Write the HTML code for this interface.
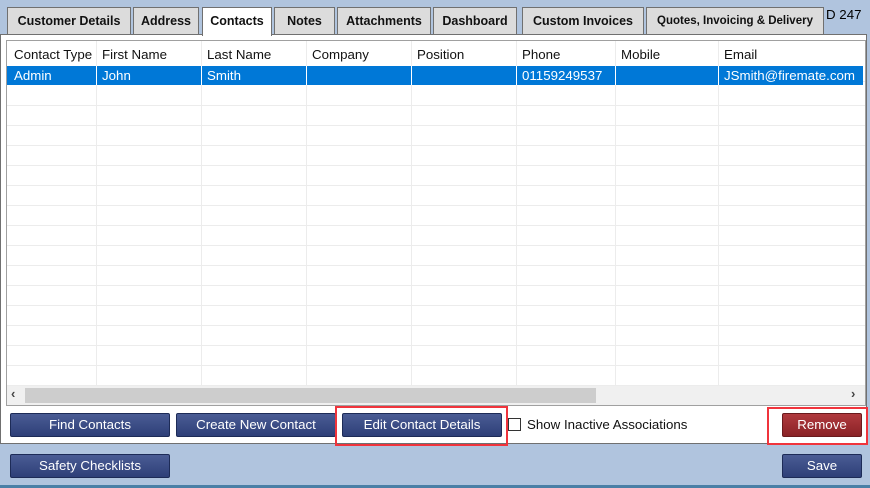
<!DOCTYPE html><html><head><style>
*{box-sizing:border-box;margin:0;padding:0}
body{width:870px;height:488px;background:#b0c4de;font-family:"Liberation Sans",Arial,sans-serif;position:relative;overflow:hidden}
.a{position:absolute}
.tab{position:absolute;top:7px;height:27px;background:#dcdcdc;border:1px solid #707070;border-bottom:none;font-weight:bold;font-size:12.5px;text-align:center;line-height:27px;color:#111}
.panel{left:0;top:34px;width:867px;height:410px;background:#fff;border:1px solid #707070}
.grid{left:6px;top:40px;width:860px;height:366px;border:1px solid #a0a0a0;background:#fff;
background-image:repeating-linear-gradient(to bottom,transparent 0,transparent 19px,#ececec 19px,#ececec 20px);background-position:0 45px}
.vl{position:absolute;top:41px;width:1px;height:345px;background:#ececec}
.h{position:absolute;top:47px;font-size:13.3px;color:#111}
.sel{left:7px;top:66px;width:856px;height:19px;background:#0078d7}
.c{position:absolute;top:68px;font-size:13.3px;color:#fff}
.btn{position:absolute;height:24px;border:1px solid #1d2b57;border-radius:2px;background:linear-gradient(#4a5c94,#2e3f78);color:#fff;font-size:13.3px;text-align:center;line-height:22px}
.red{position:absolute;border:2px solid #f0343c}
</style></head><body>
<div class="a panel"></div>
<div class="tab" style="left:7px;width:124px">Customer Details</div>
<div class="tab" style="left:133px;width:66px">Address</div>
<div class="tab" style="left:202px;width:70px;background:#fff;height:29px">Contacts</div>
<div class="tab" style="left:274px;width:61px">Notes</div>
<div class="tab" style="left:337px;width:94px">Attachments</div>
<div class="tab" style="left:433px;width:84px">Dashboard</div>
<div class="tab" style="left:522px;width:122px">Custom Invoices</div>
<div class="tab" style="left:646px;width:178px;font-size:11.5px">Quotes, Invoicing &amp; Delivery</div>
<div class="a" style="left:826px;top:7px;font-size:13.3px">D 247</div>
<div class="a grid"></div>
<div class="a" style="left:7px;top:41px;width:858px;height:25px;background:#fff"></div>
<div class="vl" style="left:96px"></div><div class="vl" style="left:201px"></div><div class="vl" style="left:306px"></div><div class="vl" style="left:411px"></div><div class="vl" style="left:516px"></div><div class="vl" style="left:615px"></div><div class="vl" style="left:718px"></div>
<div class="h" style="left:14px">Contact Type</div><div class="h" style="left:102px">First Name</div><div class="h" style="left:207px">Last Name</div><div class="h" style="left:312px">Company</div><div class="h" style="left:417px">Position</div><div class="h" style="left:522px">Phone</div><div class="h" style="left:621px">Mobile</div><div class="h" style="left:724px">Email</div>
<div class="a sel"></div>
<div class="vl" style="left:96px;top:66px;height:19px;background:#fff"></div><div class="vl" style="left:201px;top:66px;height:19px;background:#fff"></div><div class="vl" style="left:306px;top:66px;height:19px;background:#fff"></div><div class="vl" style="left:411px;top:66px;height:19px;background:#fff"></div><div class="vl" style="left:516px;top:66px;height:19px;background:#fff"></div><div class="vl" style="left:615px;top:66px;height:19px;background:#fff"></div><div class="vl" style="left:718px;top:66px;height:19px;background:#fff"></div>
<div class="c" style="left:14px">Admin</div><div class="c" style="left:102px">John</div><div class="c" style="left:207px">Smith</div><div class="c" style="left:522px">01159249537</div><div class="c" style="left:724px">JSmith@firemate.com</div>
<div class="a" style="left:7px;top:386px;width:858px;height:19px;background:#f0f0f0"></div>
<div class="a" style="left:25px;top:388px;width:571px;height:15px;background:#cdcdcd"></div>
<div class="a" style="left:11px;top:386px;font-size:13px;color:#444;font-weight:bold">‹</div>
<div class="a" style="left:851px;top:386px;font-size:13px;color:#444;font-weight:bold">›</div>
<div class="btn" style="left:10px;top:413px;width:160px">Find Contacts</div>
<div class="btn" style="left:176px;top:413px;width:160px">Create New Contact</div>
<div class="btn" style="left:342px;top:413px;width:160px">Edit Contact Details</div>
<div class="red" style="left:335px;top:406px;width:173px;height:40px"></div>
<div class="a" style="left:508px;top:418px;width:13px;height:13px;border:1px solid #333;background:#fff"></div>
<div class="a" style="left:527px;top:417px;font-size:13.3px;color:#111">Show Inactive Associations</div>
<div class="btn" style="left:782px;top:413px;width:80px;background:linear-gradient(#b03a3e,#8a2226);border-color:#6a1a1d">Remove</div>
<div class="red" style="left:767px;top:407px;width:101px;height:38px"></div>
<div class="btn" style="left:10px;top:454px;width:160px">Safety Checklists</div>
<div class="btn" style="left:782px;top:454px;width:80px">Save</div>
<div class="a" style="left:0;top:485px;width:870px;height:3px;background:#4a7fa6"></div>
</body></html>
